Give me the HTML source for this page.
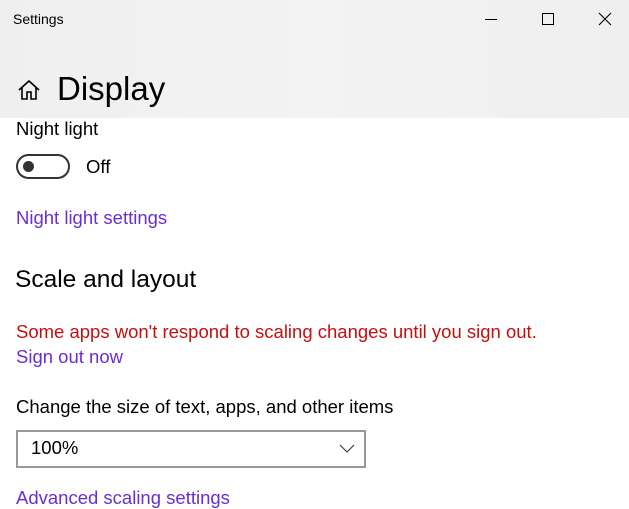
<html><head><style>
body{margin:0;width:629px;height:499px;overflow:hidden;background:#fff;font-family:"Liberation Sans",sans-serif;color:#000;position:relative}
.h{position:absolute;left:0;top:0;width:629px;height:118px;background:linear-gradient(90deg,#efefef,#f3f3f3 50%,#efefef)}
.t{position:absolute;white-space:nowrap}
.l{color:#6a2ed1}
.m{font-size:18.5px}
</style></head><body>
<div class="h"></div>
<div class="t" style="left:13px;top:11px;font-size:14px">Settings</div>
<div class="t" style="left:485px;top:19px;width:12px;height:1px;background:#000"></div>
<div class="t" style="left:542px;top:13px;width:10px;height:10px;border:1px solid #000"></div>
<svg class="t" style="left:598px;top:12px" width="14" height="14"><path d="M1 1L13 13M13 1L1 13" stroke="#000" stroke-width="1.1"/></svg>
<svg class="t" style="left:17px;top:79px" width="24" height="22"><path d="M2 11L12 2L22 11M5 8.5V20H10V13H14V20H19V8.5" fill="none" stroke="#000" stroke-width="1.6"/></svg>
<div class="t" style="left:57px;top:70px;font-size:33px">Display</div>
<div class="t m" style="left:16px;top:118px">Night light</div>
<div class="t" style="left:16px;top:154px;width:50px;height:21px;border:2px solid #333;border-radius:13px"></div>
<div class="t" style="left:23px;top:161px;width:11px;height:11px;border-radius:50%;background:#333"></div>
<div class="t m" style="left:86px;top:156px">Off</div>
<div class="t l m" style="left:16px;top:207px">Night light settings</div>
<div class="t" style="left:15px;top:266px;font-size:24.5px">Scale and layout</div>
<div class="t m" style="left:16px;top:321px;color:#c50f0f">Some apps won't respond to scaling changes until you sign out.</div>
<div class="t l m" style="left:16px;top:346px">Sign out now</div>
<div class="t m" style="left:16px;top:396px">Change the size of text, apps, and other items</div>
<div class="t" style="left:16px;top:430px;width:346px;height:34px;border:2px solid #999"></div>
<div class="t m" style="left:31px;top:437px">100%</div>
<svg class="t" style="left:339px;top:444px" width="16" height="9"><path d="M1 1L8 8L15 1" fill="none" stroke="#333" stroke-width="1.1"/></svg>
<div class="t l m" style="left:16px;top:487px">Advanced scaling settings</div>
</body></html>
